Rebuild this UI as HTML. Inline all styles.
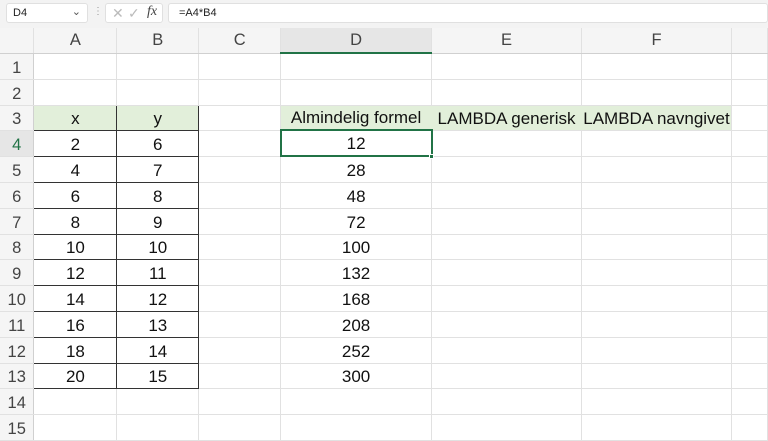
<!DOCTYPE html>
<html><head><style>
*{margin:0;padding:0;box-sizing:border-box}
body{width:768px;height:427px;overflow:hidden;background:#fff;font-family:"Liberation Sans",sans-serif;position:relative}
.fb{position:absolute;left:0;top:0;width:768px;height:28px;background:#f3f3f3}
.nb{position:absolute;left:6px;top:3px;width:82px;height:20px;background:#fff;border:1px solid #e0e0e0;border-radius:3px;font-size:11px;padding:3px 6px;color:#222}
.nb span{position:absolute;right:6px;top:1px;color:#555;font-size:11px}
.ic{position:absolute;left:105px;top:3px;width:58px;height:20px;background:#fff;border:1px solid #e0e0e0;border-radius:3px;color:#bbb;font-size:14px}
.fx{position:absolute;left:168px;top:3px;width:600px;height:20px;background:#fff;border:1px solid #e0e0e0;border-radius:3px;font-size:11px;padding:3px 10px;color:#222}
table{position:absolute;left:0;top:28px;border-collapse:collapse;table-layout:fixed}
td{border-right:1px solid #e1e1e1;border-bottom:1px solid #e1e1e1;font-size:17px;text-align:center;color:#111;padding:0 0 1px 0;vertical-align:bottom;overflow:visible;white-space:nowrap;line-height:20px}
tr.h td{background:#f5f5f5;color:#444;font-size:16.5px;border-bottom:1px solid #d0d0d0;vertical-align:middle}
td.r{background:#f5f5f5;color:#444;font-size:16.5px;text-align:center;border-right:1px solid #d0d0d0}
.g{background:#e2efda}
.t{border:1px solid #333!important}
</style></head><body>
<div class="fb">
<div class="nb">D4<span>&#8964;</span></div>
<div style="position:absolute;left:93px;top:6px;color:#999;font-size:10px">&#8942;</div>
<div class="ic"><span style="position:absolute;left:6px;top:1px">&#10005;</span><span style="position:absolute;left:22px;top:1px">&#10003;</span><i style="position:absolute;left:41px;top:0;color:#444;font-family:'Liberation Serif',serif;font-size:14px">fx</i></div>
<div class="fx">=A4*B4</div>
</div>
<table>
<colgroup><col style="width:34px"><col style="width:83px"><col style="width:82px"><col style="width:82px"><col style="width:151px"><col style="width:150px"><col style="width:150px"><col style="width:36px"></colgroup>
<tr class="h" style="height:25px"><td style="background:#f5f5f5"></td><td>A</td><td>B</td><td>C</td><td style="background:#e6e6e6;border-bottom:2px solid #217346">D</td><td>E</td><td>F</td><td></td></tr>
<tr style="height:26px"><td class="r">1</td><td></td><td></td><td></td><td></td><td></td><td></td><td></td></tr>
<tr style="height:26px"><td class="r">2</td><td></td><td></td><td></td><td></td><td></td><td></td><td></td></tr>
<tr style="height:25px"><td class="r">3</td><td class="g t">x</td><td class="g t">y</td><td></td><td class="g" style="border-right-color:#e2efda">Almindelig formel</td><td class="g" style="border-right-color:#e2efda">LAMBDA generisk</td><td class="g">LAMBDA navngivet</td><td></td></tr>
<tr style="height:26px"><td class="r" style="background:#e6e6e6;color:#217346">4</td><td class="t">2</td><td class="t">6</td><td></td><td style="border:2px solid #217346">12</td><td></td><td></td><td></td></tr>
<tr style="height:26px"><td class="r">5</td><td class="t">4</td><td class="t">7</td><td></td><td>28</td><td></td><td></td><td></td></tr>
<tr style="height:26px"><td class="r">6</td><td class="t">6</td><td class="t">8</td><td></td><td>48</td><td></td><td></td><td></td></tr>
<tr style="height:26px"><td class="r">7</td><td class="t">8</td><td class="t">9</td><td></td><td>72</td><td></td><td></td><td></td></tr>
<tr style="height:25px"><td class="r">8</td><td class="t">10</td><td class="t">10</td><td></td><td>100</td><td></td><td></td><td></td></tr>
<tr style="height:26px"><td class="r">9</td><td class="t">12</td><td class="t">11</td><td></td><td>132</td><td></td><td></td><td></td></tr>
<tr style="height:26px"><td class="r">10</td><td class="t">14</td><td class="t">12</td><td></td><td>168</td><td></td><td></td><td></td></tr>
<tr style="height:26px"><td class="r">11</td><td class="t">16</td><td class="t">13</td><td></td><td>208</td><td></td><td></td><td></td></tr>
<tr style="height:26px"><td class="r">12</td><td class="t">18</td><td class="t">14</td><td></td><td>252</td><td></td><td></td><td></td></tr>
<tr style="height:25px"><td class="r">13</td><td class="t">20</td><td class="t">15</td><td></td><td>300</td><td></td><td></td><td></td></tr>
<tr style="height:26px"><td class="r">14</td><td></td><td></td><td></td><td></td><td></td><td></td><td></td></tr>
<tr style="height:26px"><td class="r">15</td><td></td><td></td><td></td><td></td><td></td><td></td><td></td></tr>
</table>
<div style="position:absolute;left:429px;top:154px;width:5px;height:5px;background:#217346;border:1px solid #fff"></div>
</body></html>
